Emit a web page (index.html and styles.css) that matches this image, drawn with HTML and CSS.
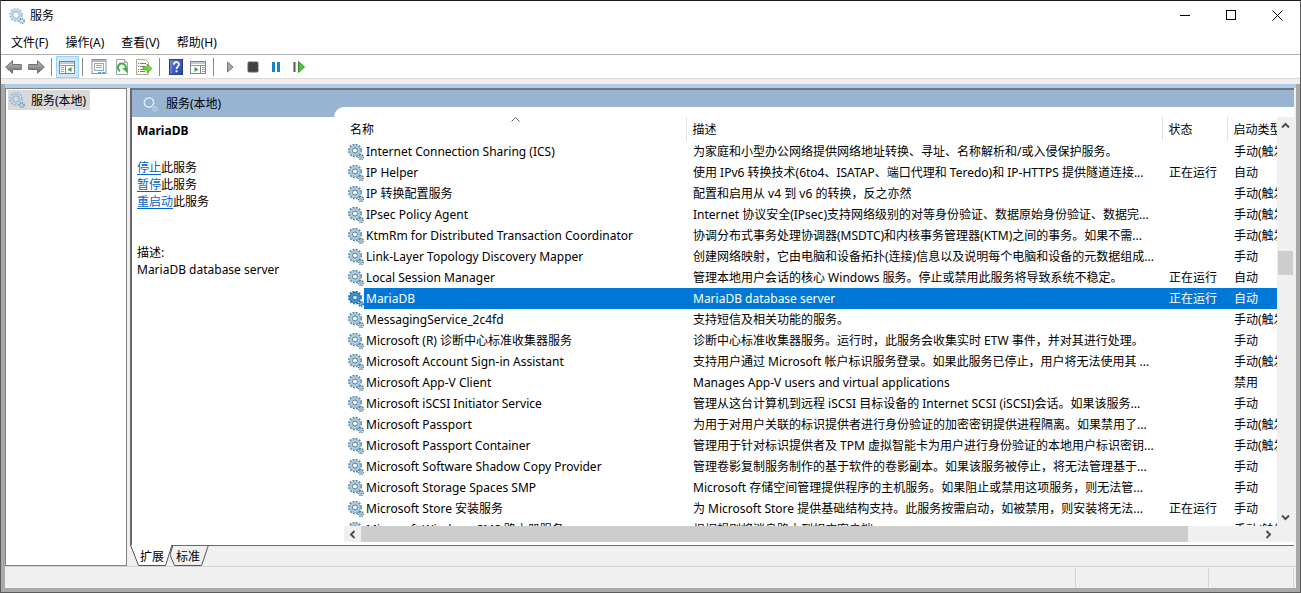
FILE: index.html
```html
<!DOCTYPE html>
<html lang="zh-CN">
<head>
<meta charset="utf-8">
<title>服务</title>
<link rel="stylesheet" href="styles.css">
</head>
<body>
<svg class="defs" aria-hidden="true">
  <defs>
    <symbol id="gear" viewBox="0 0 16 16">
      <circle cx="7" cy="6.500" r="5.900" fill="none" stroke="#5f87a3" stroke-width="2.200" stroke-dasharray="1.800 1.290"/>
      <circle cx="7" cy="6.500" r="4" fill="#fff" stroke="#a9cde2" stroke-width="3"/>
      <circle cx="7" cy="6.500" r="5.300" fill="none" stroke="#7da5bf" stroke-width="0.600"/>
      <circle cx="7" cy="6.500" r="2.500" fill="#fff" stroke="#56748c" stroke-width="1"/>
      <circle cx="13" cy="13" r="2.400" fill="none" stroke="#55798f" stroke-width="1.600" stroke-dasharray="1.100 .8"/>
      <circle cx="13" cy="13" r="1.300" fill="#dcebf4" stroke="#7ba3bd" stroke-width="1"/>
    </symbol>
    <symbol id="gear-pale" viewBox="0 0 16 16">
      <circle cx="7" cy="7" r="6" fill="none" stroke="#8cb4d4" stroke-width="1.600" stroke-dasharray="1.900 1.240"/>
      <circle cx="7" cy="7" r="4.300" fill="none" stroke="#b4d6ee" stroke-width="2"/>
      <circle cx="7" cy="7" r="3.200" fill="none" stroke="#7f9db3" stroke-width="0.700"/>
      <circle cx="13" cy="13" r="2" fill="none" stroke="#7299b5" stroke-width="2" stroke-dasharray="1 .7"/>
    </symbol>
    <symbol id="gear-head" viewBox="0 0 16 16">
      <circle cx="7" cy="6.500" r="5.900" fill="none" stroke="#86aaca" stroke-width="1" stroke-dasharray="1.800 1.290"/>
      <circle cx="7" cy="6.500" r="4.500" fill="none" stroke="#cfe3f2" stroke-width="2.200"/>
      <circle cx="7" cy="6.500" r="3.200" fill="none" stroke="#7795b3" stroke-width=".6"/>
      <circle cx="13" cy="13" r="1.900" fill="none" stroke="#c9dbe9" stroke-width="1.800" stroke-dasharray="1 .7"/>
    </symbol>
    <symbol id="gear-sel" viewBox="0 0 16 16">
      <circle cx="7" cy="6.500" r="5.900" fill="none" stroke="#1f70b0" stroke-width="2.200" stroke-dasharray="1.800 1.290"/>
      <circle cx="7" cy="6.500" r="4" fill="#fff" stroke="#4096d8" stroke-width="3"/>
      <circle cx="7" cy="6.500" r="5.200" fill="none" stroke="#1e75bd" stroke-width="1"/>
      <circle cx="7" cy="6.500" r="2.400" fill="#d9edfb" stroke="#0f5fa6" stroke-width="1"/>
      <circle cx="13" cy="13" r="2" fill="#8dbce0" stroke="#1f6ba8" stroke-width="2" stroke-dasharray="1 .8"/>
    </symbol>
    <linearGradient id="arrow-fill" x1="0" y1="0" x2="0" y2="1"><stop offset="0" stop-color="#bdbdbd"/><stop offset="1" stop-color="#6d6d6d"/></linearGradient>
    <linearGradient id="help-fill" x1="0" y1="0" x2="1" y2="1"><stop offset="0" stop-color="#5b80dc"/><stop offset="1" stop-color="#2440a0"/></linearGradient>
  </defs>
</svg>
<div class="window">
  <header class="titlebar">
    <svg class="icon"><use href="#gear-pale"/></svg>
    <span class="title">服务</span>
    <button class="caption" aria-label="最小化"><svg width="11" height="11"><path d="M0 5.500h10" stroke="#000"/></svg></button>
    <button class="caption" aria-label="最大化"><svg width="11" height="11"><rect x=".5" y=".5" width="9" height="9" fill="none" stroke="#000"/></svg></button>
    <button class="caption" aria-label="关闭"><svg width="11" height="11"><path d="M.5.5l10 10M10.500.5l-10 10" stroke="#000"/></svg></button>
  </header>
  <nav class="menubar">
    <button>文件(F)</button><button>操作(A)</button><button>查看(V)</button><button>帮助(H)</button>
  </nav>
  <div class="toolbar">
    <button class="tool" aria-label="后退"><svg width="17" height="16"><path d="M.7 8L7.500 1.700v3.800h8.800v5H7.500v3.800z" fill="url(#arrow-fill)" stroke="#707070"/></svg></button>
    <button class="tool" aria-label="前进"><svg width="17" height="16"><path d="M16.300 8L9.500 1.700v3.800H.7v5h8.800v3.800z" fill="url(#arrow-fill)" stroke="#707070"/></svg></button>
    <span class="sep"></span>
    <button class="tool pressed" aria-label="显示/隐藏控制台树"><svg width="17" height="16"><rect x=".5" y="2.500" width="15" height="12" fill="#fff" stroke="#7d8794"/><path d="M1 4h14M1 6.500h14" stroke="#8d98a6"/><path d="M6.500 7v7.500" stroke="#7d8794"/><path d="M2 8.500h3M2 10.500h3M2 12.500h3" stroke="#8ba6c0"/><path d="M12.500 8v5l-4-2.500z" fill="#35ac35"/></svg></button>
    <span class="sep"></span>
    <button class="tool" aria-label="属性"><svg width="16" height="16"><rect x="1" y=".5" width="14" height="14" fill="#fff" stroke="#88929e"/><path d="M1 2h14" stroke="#aeb8c4" stroke-width="2"/><rect x="3.500" y="4.500" width="9" height="7" fill="#f7fbff" stroke="#9aa7b5"/><path d="M5 6.500h6M5 8.500h6" stroke="#a3b0bd"/><path d="M7 13.500h3M11 13.500h3" stroke="#4da8dd"/></svg></button>
    <button class="tool" aria-label="刷新"><svg width="16" height="16"><path d="M2.500.5h8l3 3v12h-11z" fill="#fff" stroke="#a3a3a3"/><path d="M10.500.5v3h3" fill="none" stroke="#a3a3a3"/><path d="M6 12A4 4 0 1 1 11 11" fill="none" stroke="#3bae42" stroke-width="2"/><path d="M8 9h5.500v5z" fill="#3bae42"/></svg></button>
    <button class="tool" aria-label="导出列表"><svg width="17" height="16"><path d="M.5.500h9l3 3v12H.5z" fill="#fffdf2" stroke="#b0aa94"/><path d="M2 4.500h1M4 4.500h6M2 7.500h1M4 7.500h5M2 10.500h1M4 10.500h4M2 12.500h1M4 12.500h5" stroke="#777a88"/><path d="M7 8h4V5l5 4.500-5 4.500v-3H7z" fill="#76d33a" stroke="#43a71f" stroke-width=".7"/></svg></button>
    <span class="sep"></span>
    <button class="tool" aria-label="帮助"><svg width="14" height="16"><rect x=".5" y=".5" width="13" height="15" fill="url(#help-fill)" stroke="#243f8c"/><path d="M2 1v14" stroke="#7694e0"/><path d="M4.800 5.700C4.800 2.200 10 2.300 10 5.300 10 7.600 7.500 7.500 7.500 10" fill="none" stroke="#fff" stroke-width="1.700"/><rect x="6.600" y="11.300" width="1.900" height="1.900" fill="#fff"/></svg></button>
    <button class="tool" aria-label="显示/隐藏操作窗格"><svg width="17" height="16"><rect x=".5" y="2.500" width="15" height="12" fill="#fff" stroke="#7d8794"/><path d="M1 4h14M1 6.500h14" stroke="#8d98a6"/><path d="M10.500 7v7.500" stroke="#7d8794"/><path d="M12 8.500h3M12 10.500h3M12 12.500h3" stroke="#8ba6c0"/><path d="M4.500 8v5l4-2.500z" fill="#35ac35"/></svg></button>
    <span class="sep"></span>
    <button class="tool" aria-label="启动服务"><svg width="16" height="16"><path d="M5.500 3v10l5.500-5z" fill="#aaa" stroke="#777"/></svg></button>
    <button class="tool" aria-label="停止服务"><svg width="16" height="16"><rect x="3" y="3" width="10" height="10" rx="1" fill="#404040" stroke="#606060"/></svg></button>
    <button class="tool" aria-label="暂停服务"><svg width="16" height="16"><path d="M5.500 3v10M10.500 3v10" stroke="#1e80c8" stroke-width="3"/></svg></button>
    <button class="tool" aria-label="重新启动服务"><svg width="16" height="16"><path d="M3.500 3v10" stroke="#555" stroke-width="2"/><path d="M7.500 2.500v11l6-5.500z" fill="#4bc436" stroke="#2f9422"/></svg></button>
  </div>
  <div class="band"></div>
  <div class="frame">
    <div class="client">
      <aside class="tree"><button class="node"><svg class="icon"><use href="#gear-pale"/></svg><span>服务(本地)</span></button></aside>
      <section class="result">
        <div class="pane">
          <div class="info">
            <div class="heading"><svg class="icon"><use href="#gear-head"/></svg><span>服务(本地)</span></div>
            <div class="detail">
              <h1>MariaDB</h1>
              <p class="actions"><a href="#stop">停止</a>此服务<br><a href="#pause">暂停</a>此服务<br><a href="#restart">重启动</a>此服务</p>
              <p>描述:<br>MariaDB database server</p>
            </div>
          </div>
          <div class="list">
            <div class="rows">
              <table>
                <colgroup><col class="c-name"><col><col class="c-state"><col class="c-start"></colgroup>
                <thead><tr><th>名称<svg class="sort" width="9" height="5"><path d="M.5 4.500l4-4 4 4" fill="none" stroke="#606060"/></svg></th><th>描述</th><th>状态</th><th>启动类型</th></tr></thead>
                <tbody>
                  <tr><td><svg class="icon"><use href="#gear"/></svg><span>Internet Connection Sharing (ICS)</span></td><td>为家庭和小型办公网络提供网络地址转换、寻址、名称解析和/或入侵保护服务。</td><td></td><td>手动(触发...</td></tr>
                  <tr><td><svg class="icon"><use href="#gear"/></svg><span>IP Helper</span></td><td>使用 IPv6 转换技术(6to4、ISATAP、端口代理和 Teredo)和 IP-HTTPS 提供隧道连接...</td><td>正在运行</td><td>自动</td></tr>
                  <tr><td><svg class="icon"><use href="#gear"/></svg><span>IP 转换配置服务</span></td><td>配置和启用从 v4 到 v6 的转换，反之亦然</td><td></td><td>手动(触发...</td></tr>
                  <tr><td><svg class="icon"><use href="#gear"/></svg><span>IPsec Policy Agent</span></td><td>Internet 协议安全(IPsec)支持网络级别的对等身份验证、数据原始身份验证、数据完...</td><td></td><td>手动(触发...</td></tr>
                  <tr><td><svg class="icon"><use href="#gear"/></svg><span>KtmRm for Distributed Transaction Coordinator</span></td><td>协调分布式事务处理协调器(MSDTC)和内核事务管理器(KTM)之间的事务。如果不需...</td><td></td><td>手动(触发...</td></tr>
                  <tr><td><svg class="icon"><use href="#gear"/></svg><span>Link-Layer Topology Discovery Mapper</span></td><td>创建网络映射，它由电脑和设备拓扑(连接)信息以及说明每个电脑和设备的元数据组成...</td><td></td><td>手动</td></tr>
                  <tr><td><svg class="icon"><use href="#gear"/></svg><span>Local Session Manager</span></td><td>管理本地用户会话的核心 Windows 服务。停止或禁用此服务将导致系统不稳定。</td><td>正在运行</td><td>自动</td></tr>
                  <tr class="selected"><td><svg class="icon"><use href="#gear-sel"/></svg><span>MariaDB</span></td><td>MariaDB database server</td><td>正在运行</td><td>自动</td></tr>
                  <tr><td><svg class="icon"><use href="#gear"/></svg><span>MessagingService_2c4fd</span></td><td>支持短信及相关功能的服务。</td><td></td><td>手动(触发...</td></tr>
                  <tr><td><svg class="icon"><use href="#gear"/></svg><span>Microsoft (R) 诊断中心标准收集器服务</span></td><td>诊断中心标准收集器服务。运行时，此服务会收集实时 ETW 事件，并对其进行处理。</td><td></td><td>手动</td></tr>
                  <tr><td><svg class="icon"><use href="#gear"/></svg><span>Microsoft Account Sign-in Assistant</span></td><td>支持用户通过 Microsoft 帐户标识服务登录。如果此服务已停止，用户将无法使用其 ...</td><td></td><td>手动(触发...</td></tr>
                  <tr><td><svg class="icon"><use href="#gear"/></svg><span>Microsoft App-V Client</span></td><td>Manages App-V users and virtual applications</td><td></td><td>禁用</td></tr>
                  <tr><td><svg class="icon"><use href="#gear"/></svg><span>Microsoft iSCSI Initiator Service</span></td><td>管理从这台计算机到远程 iSCSI 目标设备的 Internet SCSI (iSCSI)会话。如果该服务...</td><td></td><td>手动</td></tr>
                  <tr><td><svg class="icon"><use href="#gear"/></svg><span>Microsoft Passport</span></td><td>为用于对用户关联的标识提供者进行身份验证的加密密钥提供进程隔离。如果禁用了...</td><td></td><td>手动(触发...</td></tr>
                  <tr><td><svg class="icon"><use href="#gear"/></svg><span>Microsoft Passport Container</span></td><td>管理用于针对标识提供者及 TPM 虚拟智能卡为用户进行身份验证的本地用户标识密钥...</td><td></td><td>手动(触发...</td></tr>
                  <tr><td><svg class="icon"><use href="#gear"/></svg><span>Microsoft Software Shadow Copy Provider</span></td><td>管理卷影复制服务制作的基于软件的卷影副本。如果该服务被停止，将无法管理基于...</td><td></td><td>手动</td></tr>
                  <tr><td><svg class="icon"><use href="#gear"/></svg><span>Microsoft Storage Spaces SMP</span></td><td>Microsoft 存储空间管理提供程序的主机服务。如果阻止或禁用这项服务，则无法管...</td><td></td><td>手动</td></tr>
                  <tr><td><svg class="icon"><use href="#gear"/></svg><span>Microsoft Store 安装服务</span></td><td>为 Microsoft Store 提供基础结构支持。此服务按需启动，如被禁用，则安装将无法...</td><td>正在运行</td><td>手动</td></tr>
                  <tr><td><svg class="icon"><use href="#gear"/></svg><span>Microsoft Windows SMS 路由器服务</span></td><td>根据规则将消息路由到相应客户端。</td><td></td><td>手动(触发...</td></tr>
                </tbody>
              </table>
            </div>
            <div class="vscroll">
              <button aria-label="向上滚动"><svg width="9" height="7"><path d="M1 5.500l3.500-3.500L8 5.500" fill="none" stroke="#505050" stroke-width="2"/></svg></button>
              <span class="vtrack"><span class="vthumb"></span></span>
              <button aria-label="向下滚动"><svg width="9" height="7"><path d="M1 1.500L4.500 5 8 1.500" fill="none" stroke="#505050" stroke-width="2"/></svg></button>
            </div>
            <div class="hscroll">
              <button aria-label="向左滚动"><svg width="7" height="9"><path d="M5.500 1L2 4.500 5.500 8" fill="none" stroke="#505050" stroke-width="2"/></svg></button>
              <span class="htrack"><span class="hthumb"></span></span>
              <button aria-label="向右滚动"><svg width="7" height="9"><path d="M1.500 1L5 4.500 1.500 8" fill="none" stroke="#505050" stroke-width="2"/></svg></button>
            </div>
            <div class="corner"></div>
          </div>
        </div>
        <div class="tabs">
          <button class="tab active"><svg width="42" height="21"><path d="M.5 0L8.500 20.500h27L42 0" fill="#fff" stroke="#555"/></svg><span>扩展</span></button>
          <button class="tab"><svg width="42" height="21"><path d="M0 10L4.500 20.500h27L38.500 0M0 10L3 0" fill="none" stroke="#555"/></svg><span>标准</span></button>
        </div>
      </section>
    </div>
    <footer class="status"><span></span><span></span><span></span></footer>
  </div>
</div>
</body>
</html>
```
FILE: styles.css
```css
* { box-sizing: border-box; }
body {
  margin: 0;
  font: 12px/17px "Noto Sans", "Noto Sans CJK SC", sans-serif;
  color: #000;
}
button {
  margin: 0;
  padding: 0;
  border: 0;
  background: none;
  font: inherit;
  color: inherit;
}
svg { display: block; flex: none; }
.defs { position: absolute; width: 0; height: 0; }
.icon { width: 16px; height: 16px; }

.window {
  display: flex;
  flex-direction: column;
  height: 100vh;
  border: 1px solid #5c5c5c;
  border-top-color: #1c1a1c;
  background: #fff;
  overflow: hidden;
}
.titlebar { display: flex; align-items: center; height: 29px; padding-left: 8px; flex: none; }
.title { flex: 1; padding-left: 5px; }
.caption { display: flex; align-items: center; justify-content: center; width: 46px; height: 29px; }
.menubar { display: flex; gap: 17px; height: 25px; padding: 0 10px; border-bottom: 1px solid #b0b0b0; flex: none; }
.toolbar { display: flex; align-items: center; height: 24px; padding-left: 1px; border-bottom: 1px solid #d8d8d8; flex: none; }
.tool { display: flex; align-items: center; justify-content: center; width: 23px; height: 22px; }
.pressed { background: #cce8ff; border: 1px solid #99d1ff; }
.sep { width: 1px; height: 18px; margin: 0 4px 0 3px; background: #8a8a8a; }
.band { height: 5px; background: #f0eeee; flex: none; }

.frame {
  display: flex;
  flex-direction: column;
  flex: 1;
  min-height: 0;
  padding: 0 4px 4px;
  background: #a9a9a9;
}
.client {
  display: flex;
  gap: 3px;
  flex: 1;
  min-height: 0;
  padding-top: 4px;
  background: linear-gradient(#b4cde6 4px, #f0f0f0 4px);
}
.tree { width: 122px; padding: 1px 2px; border: 1px solid #828282; background: #fff; flex: none; }
.node { display: flex; align-items: center; gap: 6px; height: 20px; padding: 0 4px 0 1px; background: #d9d9d9; white-space: nowrap; }
.result { display: flex; flex-direction: column; flex: 1; min-width: 0; }
.pane {
  display: flex;
  flex: 1;
  min-height: 0;
  margin-right: 2px;
  border: solid #696969;
  border-width: 2px 0 0 2px;
  background: #99b4d1;
  border-top-color: #6d7884;
}
.info { display: flex; flex-direction: column; width: 202px; flex: none; }
.heading { display: flex; align-items: center; gap: 8px; height: 27px; padding-left: 10px; }
.detail { flex: 1; padding: 5px; background: #fff; }
.detail h1 { margin: 0 0 20px; font-size: 12px; line-height: 17px; }
.detail p { margin: 0; }
.detail .actions { margin-bottom: 34px; }
.detail a { color: #0066cc; text-underline-offset: 2px; }

.list {
  display: grid;
  grid-template: minmax(0, 1fr) 16px / minmax(0, 1fr) 17px;
  flex: 1;
  min-width: 0;
  margin-top: 17px;
  padding: 10px 0 3px 10px;
  background: #fff;
  border-top-left-radius: 10px;
}
.rows { overflow: hidden; }
table { width: 100%; table-layout: fixed; border-collapse: collapse; }
.c-name { width: 342px; }
.c-state { width: 65px; }
.c-start { width: 50px; }
th, td { padding: 0 0 0 7px; text-align: left; font-weight: 400; white-space: nowrap; overflow: hidden; }
th { position: relative; height: 24px; border-left: 1px solid #e2e2e2; padding-left: 6px; }
th:first-child { border-left: 0; }
.sort { position: absolute; top: 0; left: 50%; margin-left: -4px; }
td { height: 21px; line-height: 21px; }
td:first-child { display: flex; align-items: center; padding-left: 4px; }
td:first-child span { flex: 1; padding-left: 2px; }
.selected td, .selected td:first-child span { background: #0078d7; color: #fff; }
.selected td:first-child { background: none; }

.vscroll, .hscroll, .corner { background: #f0f0f0; }
.vscroll, .hscroll { display: flex; }
.vscroll { flex-direction: column; }
.vscroll button, .hscroll button { display: flex; align-items: center; justify-content: center; width: 17px; height: 17px; flex: none; }
.hscroll button { height: 16px; }
.vtrack { display: flex; flex-direction: column; flex: 1; padding: 117px 1px 0; }
.vthumb { height: 24px; background: #cdcdcd; }
.htrack { display: flex; flex: 1; }
.hthumb { width: 92%; background: #cdcdcd; }

.tabs { display: flex; height: 21px; border-top: 1px solid #696969; margin-right: 2px; flex: none; }
.tab { position: relative; width: 40px; height: 20px; }
.tab svg { position: absolute; top: -1px; left: 0; }
.tab span { position: relative; }
.tab.active { padding-left: 4px; z-index: 1; }
.tab:not(.active) { padding-right: 4px; }

.status { display: grid; grid-template-columns: 1fr 133px 85px 2px; height: 22px; border-top: 1px solid #d4d4d4; background: #f0f0f0; flex: none; }
.status span { margin: 1px 0; border-right: 1px solid #d4d4d4; }
```
